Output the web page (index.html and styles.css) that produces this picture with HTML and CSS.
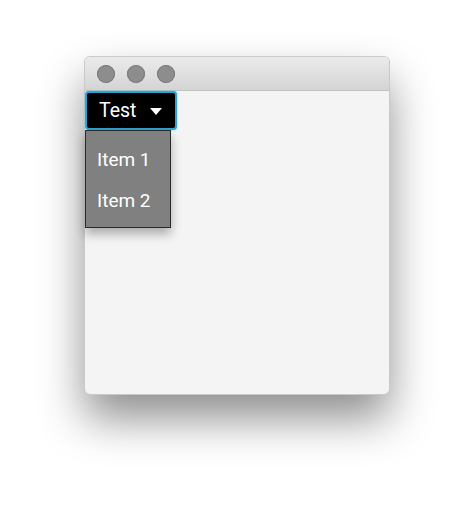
FILE: index.html
```html
<!DOCTYPE html>
<html>
<head>
<meta charset="utf-8">
<link rel="stylesheet" href="styles.css">
</head>
<body>
<div class="window">
  <div class="titlebar">
    <span class="dot"></span><span class="dot"></span><span class="dot"></span>
  </div>
  <div class="content">
    <div class="menu-wrap">
      <div class="menubutton">
        <span class="label">Test</span>
        <svg class="arrow" width="12" height="7" viewBox="0 0 12 7"><polygon points="0,0 12,0 6,7" fill="#fff"/></svg>
      </div>
      <div class="popup">
        <div class="item">Item 1</div>
        <div class="item">Item 2</div>
      </div>
    </div>
  </div>
</div>
</body>
</html>
```
FILE: styles.css
```css
html, body { margin: 0; padding: 0; background: #fff; }
body { width: 474px; height: 507px; overflow: hidden; font-family: Roboto, "Liberation Sans", sans-serif; }
.window {
  margin: 57px 0 0 85px;
  width: 304px;
  height: 337px;
  border-radius: 5px;
  background: #f4f4f4;
  box-shadow: 0 0 0 1px #c9c9c9, 0 24px 45px rgba(0,0,0,0.45);
  display: flex;
  flex-direction: column;
}
.titlebar {
  height: 34px;
  border-radius: 5px 5px 0 0;
  background: linear-gradient(#ebebeb, #d4d4d4);
  border-bottom: 1px solid #c4c4c4;
  box-sizing: border-box;
  display: flex;
  align-items: center;
  gap: 12px;
  padding-left: 12px;
}
.dot {
  width: 18px; height: 18px; border-radius: 50%;
  background: #8d8d8d;
  box-shadow: inset 0 0 0 1px #7a7a7a;
}
.content { flex: 1; position: relative; }
.menu-wrap { position: relative; width: 92px; }
.menubutton {
  box-sizing: border-box;
  width: 92px; height: 39px;
  background: #000;
  border: 2px solid #2fa3cf;
  border-radius: 4px;
  box-shadow: 0 0 2px #4cc3ee;
  display: flex; align-items: center;
  padding-left: 12px;
  color: #fff;
  font-size: 19.5px;
}
.label { margin-right: 14px; }
.arrow { margin-top: 1px; }
.popup {
  position: absolute;
  top: 39px; left: 0;
  box-sizing: border-box;
  width: 86px; height: 98px;
  background: #808080;
  border: 1px solid #2a2a2a;
  box-shadow: 0 6px 10px rgba(0,0,0,0.3);
  padding-top: 15px;
}
.item {
  color: #fff;
  font-size: 19px;
  padding-left: 11px;
  height: 41px;
  line-height: 27px;
}
```
